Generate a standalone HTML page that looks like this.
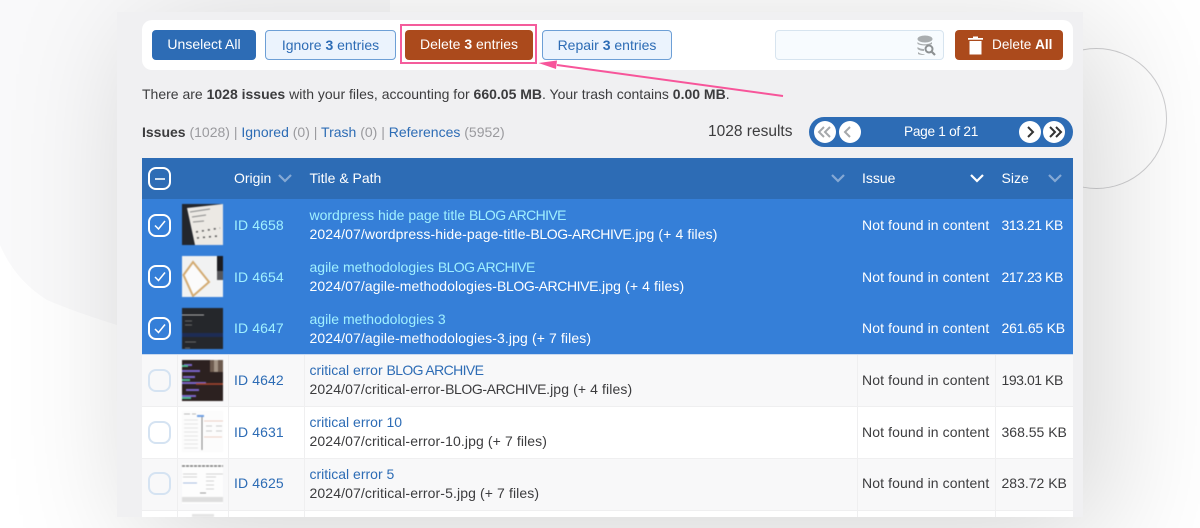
<!DOCTYPE html>
<html><head><meta charset="utf-8">
<style>
html,body{margin:0;padding:0;width:1200px;height:528px;overflow:hidden;background:#fff}
body{position:relative;font-family:"Liberation Sans",sans-serif;font-size:14px;color:#3c3c3e}
div,span.a,svg.a{position:absolute}
.t{position:absolute;white-space:nowrap;line-height:18px}
.btn{position:absolute;top:30px;height:30px;line-height:29px;text-align:center;border-radius:4px;box-sizing:border-box;font-size:14px;white-space:nowrap}
.lt{background:#ebf3fd;border:1px solid #6d9fd6;color:#2d6cb5}
.dk{background:#ab4a1c;color:#fff}
.row{left:142px;width:931px;height:52px}
.sel{background:#357fd8}
.cb{position:absolute;left:147.5px;width:19px;height:19px;border-radius:8px;border:2.5px solid #fff;box-sizing:content-box}
.cbo{border-color:#d5e3f2;background:transparent}
.l{color:#2d6cb5}
.c{color:#a0f0ff}
.w{color:#fff}
.b{font-weight:bold}
.g{color:#9a9a9e}
.p{letter-spacing:.11px}
.n{letter-spacing:.1px}
.cap{letter-spacing:-.62px}
.cap2{letter-spacing:-.4px}
.th{filter:blur(.4px)}
</style></head><body>
<!-- background -->
<svg class="a" style="left:0;top:0" width="1200" height="528"><path d="M0 0H390V12H117V325Q75 312 47 300Q15 280 0 245Z" fill="#f9f9fa"/></svg>
<div style="left:1026px;top:48px;width:139px;height:139px;border:1px solid #cfcfd1;border-radius:50%"></div>
<div style="left:117px;top:12px;width:966px;height:505px;background:#f0f0f2;box-shadow:20px 20px 120px rgba(0,0,0,.17)"></div>
<!-- top bar -->
<div style="left:142px;top:20px;width:931px;height:50px;background:#fff;border-radius:10px"></div>
<div class="btn" style="left:152px;width:104px;background:#2d6cb5;color:#fff">Unselect All</div>
<div class="btn lt" style="left:265px;width:131px">Ignore <b>3</b> entries</div>
<div class="btn dk" style="left:405px;width:128px">Delete <b>3</b> entries</div>
<div class="btn lt" style="left:542px;width:130px">Repair <b>3</b> entries</div>
<div style="left:400px;top:24px;width:133px;height:36px;border:2px solid #f45c9c"></div>
<div style="left:775px;top:30px;width:169px;height:30px;box-sizing:border-box;background:#f7fbfe;border:1px solid #d7e4ef;border-radius:4px"></div>
<svg class="a" style="left:916px;top:35px" width="22" height="21" viewBox="0 0 22 21"><ellipse cx="9" cy="4" rx="7.5" ry="3.5" fill="#a9adaf"/><path d="M1.5 7C4 10 13 10 16 7V9C13 11 5 11 1.5 9Z" fill="#a9adaf"/><path d="M1.500 12Q4 14 8 14V16Q4 16 1.500 14ZM2 17Q4 19 9 19.500L8 20Q4 20 2 19Z" fill="#a9adaf"/><circle cx="13" cy="14" r="3.500" fill="none" stroke="#8d9193" stroke-width="2"/><path d="M15.500 16.500L19 20" stroke="#8d9193" stroke-width="2.200"/></svg>
<div class="btn dk" style="left:955px;width:108px;text-align:left;padding-left:37px;font-size:13.6px">Delete <b>All</b></div>
<svg class="a" style="left:967px;top:35px" width="17" height="20" viewBox="0 0 17 20"><path d="M1 3H6V1.500H11V3H16V4.800H1ZM2.500 6H14.500V19.500H2.500Z" fill="#fff"/></svg>
<!-- arrow -->
<svg class="a" style="left:530px;top:58px" width="260" height="45"><path d="M27 7L253 38" stroke="#f7559a" stroke-width="2"/><path d="M8.500 5L27 2.500L26 11Z" fill="#f7559a"/></svg>
<!-- summary -->
<div class="t" style="left:142px;top:85px;font-size:14px">There are <b>1028 issues</b> with your files, accounting for <b>660.05 MB</b>. Your trash contains <b>0.00 MB</b>.</div>
<div class="t" style="left:142px;top:123px;font-size:14px"><b>Issues</b> <span class="g">(1028)</span> <span class="g">|</span> <span class="l">Ignored</span> <span class="g">(0)</span> <span class="g">|</span> <span class="l">Trash</span> <span class="g">(0)</span> <span class="g">|</span> <span class="l">References</span> <span class="g">(5952)</span></div>
<div class="t" style="left:708px;top:123px;font-size:15.5px">1028 results</div>
<!-- pager -->
<div style="left:809px;top:117px;width:264px;height:30px;background:#2d6cb5;border-radius:15px"></div>
<div class="t w" style="left:904px;top:123px;font-size:13.7px;letter-spacing:-.3px">Page 1 of 21</div>
<div style="left:814px;top:121px;width:22px;height:22px;background:#fff;border-radius:50%"></div>
<div style="left:839px;top:121px;width:22px;height:22px;background:#fff;border-radius:50%"></div>
<div style="left:1019px;top:121px;width:22px;height:22px;background:#fff;border-radius:50%"></div>
<div style="left:1043px;top:121px;width:22px;height:22px;background:#fff;border-radius:50%"></div>
<svg class="a" style="left:809px;top:117px" width="264" height="30" fill="none" stroke-width="2"><path d="M15 10L10 15L15 20M21 10L16 15L21 20M41 10L36 15L41 20" stroke="#a5a8ab"/><path d="M219 10L224 15L219 20" stroke="#333"/><path d="M241 10L246 15L241 20M247 10L252 15L247 20" stroke="#333"/></svg>
<!-- header -->
<div style="left:142px;top:158px;width:931px;height:41px;background:#2d6cb5"></div>
<div class="cb" style="top:167px"></div>
<div style="left:155px;top:178px;width:10px;height:2px;background:#cfdff0"></div>
<div class="t w" style="left:234px;top:169px;font-size:14px">Origin</div>
<div class="t w" style="left:309.5px;top:169px;font-size:14px">Title &amp; Path</div>
<div class="t w" style="left:862px;top:169px;font-size:14px">Issue</div>
<div class="t w" style="left:1001.5px;top:169px;font-size:14px">Size</div>
<svg class="a" style="left:142px;top:158px" width="931" height="41" fill="none" stroke-width="2.200"><path d="M137 17L143 23L149 17M690 17L696 23L702 17M907 17L913 23L919 17" stroke="#85a9d4"/><path d="M829 17L835 23L841 17" stroke="#fff"/></svg>

<!-- rows -->
<div class="row sel" style="top:199px;height:155px"></div>
<div style="left:142px;top:354px;width:931px;height:1px;background:#c9d9ee"></div>
<div style="left:142px;top:355px;width:931px;height:51px;background:#f8f8f9"></div>
<div style="left:142px;top:406px;width:931px;height:1px;background:#efeff0"></div>
<div style="left:142px;top:407px;width:931px;height:51px;background:#fff"></div>
<div style="left:142px;top:458px;width:931px;height:1px;background:#efeff0"></div>
<div style="left:142px;top:459px;width:931px;height:51px;background:#f8f8f9"></div>
<div style="left:142px;top:510px;width:931px;height:1px;background:#efeff0"></div>
<div style="left:142px;top:511px;width:931px;height:6px;background:#fff"></div>
<div style="left:177px;top:355px;width:1px;height:162px;background:#efeff0"></div>
<div style="left:228px;top:355px;width:1px;height:162px;background:#efeff0"></div>
<div style="left:304px;top:355px;width:1px;height:162px;background:#efeff0"></div>
<div style="left:857px;top:355px;width:1px;height:162px;background:#efeff0"></div>
<div style="left:995px;top:355px;width:1px;height:162px;background:#efeff0"></div>

<!-- checkboxes -->
<div class="cb" style="top:213.5px"></div><div class="cb" style="top:265px"></div><div class="cb" style="top:317px"></div>
<svg class="a" style="left:142px;top:199px" width="35" height="155" fill="none" stroke="#fff" stroke-width="1.500"><path d="M13 26.500L16.500 30L23 22M13 78L16.500 81.500L23 73.500M13 130L16.500 133.500L23 125.500"/></svg>
<div class="cb cbo" style="top:369px"></div><div class="cb cbo" style="top:420.5px"></div><div class="cb cbo" style="top:472px"></div>

<!-- thumbnails -->
<svg class="a th" style="left:182px;top:204px" width="41" height="41" viewBox="0 0 41 41"><rect width="41" height="41" fill="#23262c"/><path d="M5 4L41 0V41H13Z" fill="#ece9e4"/><path d="M8 8L28 5M10 13L24 11M11 18L22 17" stroke="#888" stroke-width="1"/><path d="M14 28L38 24M15 34L36 32" stroke="#555" stroke-width="1.500" stroke-dasharray="2 4"/></svg>
<svg class="a th" style="left:182px;top:256px" width="41" height="41" viewBox="0 0 41 41"><rect width="41" height="41" fill="#f1f2f2"/><path d="M1.500 19L11 6L27 26L11 40Z" fill="#fbfbfb" stroke="#d3ab72" stroke-width="2"/><rect x="35" y="0" width="6" height="15" fill="#1c1c20"/><rect x="35" y="15" width="6" height="9" fill="#55565a"/></svg>
<svg class="a th" style="left:182px;top:308px" width="41" height="41" viewBox="0 0 41 41"><rect width="41" height="41" fill="#25272b"/><path d="M0 7H22" stroke="#aaa" stroke-width="1"/><path d="M3 13H10M3 17H10M3 34H14M3 40H8" stroke="#666" stroke-width="1"/><rect y="25" width="41" height="4" fill="#1d2c55"/></svg>
<svg class="a th" style="left:182px;top:360px" width="41" height="41" viewBox="0 0 41 41"><rect width="41" height="41" fill="#2c2120"/><rect x="28" width="13" height="12" fill="#6d5b4f"/><rect x="32" width="4" height="12" fill="#a39485"/><path d="M2 5H10M0 11H18M1 17H13M0 23H24M4 30H17M0 36H14" stroke="#7a65c8" stroke-width="2"/><path d="M0 6H6M0 20H8M0 38H9" stroke="#4eb88d" stroke-width="2"/><path d="M14 24H41" stroke="#a8452f" stroke-width="1.500"/></svg>
<svg class="a th" style="left:182px;top:411px" width="41" height="41" viewBox="0 0 41 41"><rect width="41" height="41" fill="#fcfcfc"/><path d="M2 3H8M10 3H14" stroke="#bbb"/><rect x="15" y="4" width="7" height="2" fill="#6f9fe2"/><path d="M20 6V39" stroke="#888"/><path d="M2 9H16M2 13H16M2 17H16M2 21H16M2 25H16M2 29H16M2 33H16M2 37H16" stroke="#e4e4e4"/><path d="M22 10H41M22 26H40" stroke="#eccfc6"/><path d="M24 15H30M34 15H40M24 20H30M34 20H40" stroke="#ccc"/></svg>
<svg class="a th" style="left:182px;top:463px" width="41" height="41" viewBox="0 0 41 41"><rect width="41" height="41" fill="#fdfdfd"/><path d="M0 3H41" stroke="#777" stroke-width="1.500" stroke-dasharray="3 1"/><path d="M1 11H15M1 14H15M24 11H41M24 14H34M24 18H32M24 22H32M24 26H32" stroke="#d4d4d4"/><path d="M1 20H15" stroke="#a8bee0"/><rect y="34" width="41" height="5" fill="#dedede"/><path d="M18 30H24" stroke="#999"/></svg>
<svg class="a th" style="left:182px;top:513px" width="41" height="4"><rect x="10" y="1" width="22" height="3" fill="#e5e5e5"/></svg>

<!-- row text -->
<div class="t c n" style="left:234px;top:216px">ID 4658</div>
<div class="t c" style="left:309.5px;top:206px">wordpress hide page title <span class="cap">BLOG ARCHIVE</span></div>
<div class="t w p" style="left:309.5px;top:225px">2024/07/wordpress-hide-page-title-<span class="cap2">BLOG-ARCHIVE</span>.jpg (+ 4 files)</div>
<div class="t w" style="left:862px;top:216px;letter-spacing:.1px">Not found in content</div>
<div class="t w" style="left:1001.5px;top:216px;letter-spacing:-.45px">313.21 KB</div>

<div class="t c n" style="left:234px;top:268px">ID 4654</div>
<div class="t c" style="left:309.5px;top:258px">agile methodologies <span class="cap">BLOG ARCHIVE</span></div>
<div class="t w p" style="left:309.5px;top:277px">2024/07/agile-methodologies-<span class="cap2">BLOG-ARCHIVE</span>.jpg (+ 4 files)</div>
<div class="t w" style="left:862px;top:268px;letter-spacing:.1px">Not found in content</div>
<div class="t w" style="left:1001.5px;top:268px;letter-spacing:-.45px">217.23 KB</div>

<div class="t c n" style="left:234px;top:319px">ID 4647</div>
<div class="t c" style="left:309.5px;top:310px">agile methodologies 3</div>
<div class="t w p" style="left:309.5px;top:329px">2024/07/agile-methodologies-3.jpg (+ 7 files)</div>
<div class="t w" style="left:862px;top:319px;letter-spacing:.1px">Not found in content</div>
<div class="t w" style="left:1001.5px;top:319px;letter-spacing:-.22px">261.65 KB</div>

<div class="t l n" style="left:234px;top:371px">ID 4642</div>
<div class="t l" style="left:309.5px;top:361px">critical error <span class="cap">BLOG ARCHIVE</span></div>
<div class="t p" style="left:309.5px;top:380px">2024/07/critical-error-<span class="cap2">BLOG-ARCHIVE</span>.jpg (+ 4 files)</div>
<div class="t" style="left:862px;top:371px;letter-spacing:.1px">Not found in content</div>
<div class="t" style="left:1001.5px;top:371px;letter-spacing:-.45px">193.01 KB</div>

<div class="t l n" style="left:234px;top:423px">ID 4631</div>
<div class="t l" style="left:309.5px;top:413px">critical error 10</div>
<div class="t p" style="left:309.5px;top:432px">2024/07/critical-error-10.jpg (+ 7 files)</div>
<div class="t" style="left:862px;top:423px;letter-spacing:.1px">Not found in content</div>
<div class="t" style="left:1001.5px;top:423px">368.55 KB</div>

<div class="t l n" style="left:234px;top:474px">ID 4625</div>
<div class="t l" style="left:309.5px;top:465px">critical error 5</div>
<div class="t p" style="left:309.5px;top:484px">2024/07/critical-error-5.jpg (+ 7 files)</div>
<div class="t" style="left:862px;top:474px;letter-spacing:.1px">Not found in content</div>
<div class="t" style="left:1001.5px;top:474px">283.72 KB</div>
</body></html>
